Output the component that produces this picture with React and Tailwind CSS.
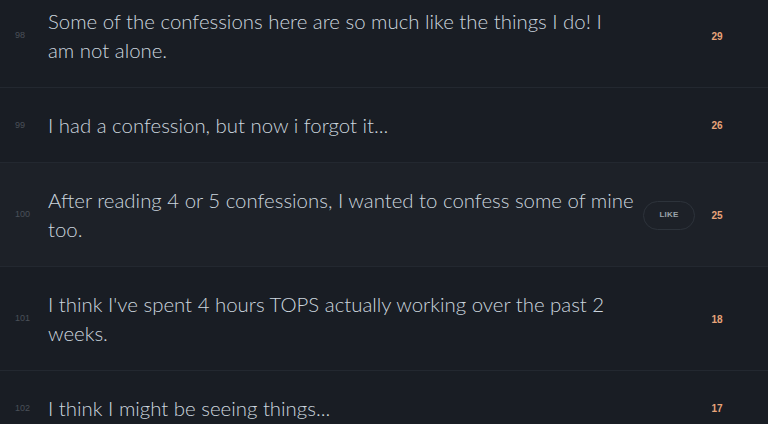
import React from 'react';

const confessions = [
  { id: 98, text: ['Some of the confessions here are so much like the things I do! I', 'am not alone.'], likes: 29 },
  { id: 99, text: 'I had a confession, but now i forgot it...', likes: 26 },
  { id: 100, text: 'After reading 4 or 5 confessions, I wanted to confess some of mine too.', likes: 25, hover: true },
  { id: 101, text: "I think I've spent 4 hours TOPS actually working over the past 2 weeks.", likes: 18 },
  { id: 102, text: 'I think I might be seeing things...', likes: 17 },
];

const Row = ({ item }) => (
  <div
    className={`flex items-center border-b border-[#232830] pt-[23px] pb-[22px] ${item.hover ? 'bg-[#1d2128]' : ''}`}
  >
    <div className="w-[48px] shrink-0 pl-[15px] text-[9px] text-[#4a5058] font-['Liberation_Sans',sans-serif]">
      {item.id}
    </div>
    <div className="w-[586px] shrink-0 text-[20.4px] leading-[29px] font-light text-[#ccd6df] font-['Lato',sans-serif]">
      {Array.isArray(item.text)
        ? item.text.map((line, i) => <div key={i}>{line}</div>)
        : item.text}
    </div>
    <div className="w-[70px] shrink-0 flex justify-center">
      {item.hover && (
        <button className="w-[52px] h-[29px] rounded-full border border-[#2d333b] text-[8px] font-bold text-[#9aa3ab] tracking-wide font-['Liberation_Sans',sans-serif]">
          LIKE
        </button>
      )}
    </div>
    <div className="flex-1 text-center pr-[38px] text-[10px] font-bold text-[#e8a47a] font-['Liberation_Sans',sans-serif]">
      {item.likes}
    </div>
  </div>
);

export default function App() {
  return (
    <div className="w-[768px] h-[424px] overflow-hidden bg-[#191d24]">
      <div className="-mt-[16px]">
        {confessions.map((c) => (
          <Row key={c.id} item={c} />
        ))}
      </div>
    </div>
  );
}
